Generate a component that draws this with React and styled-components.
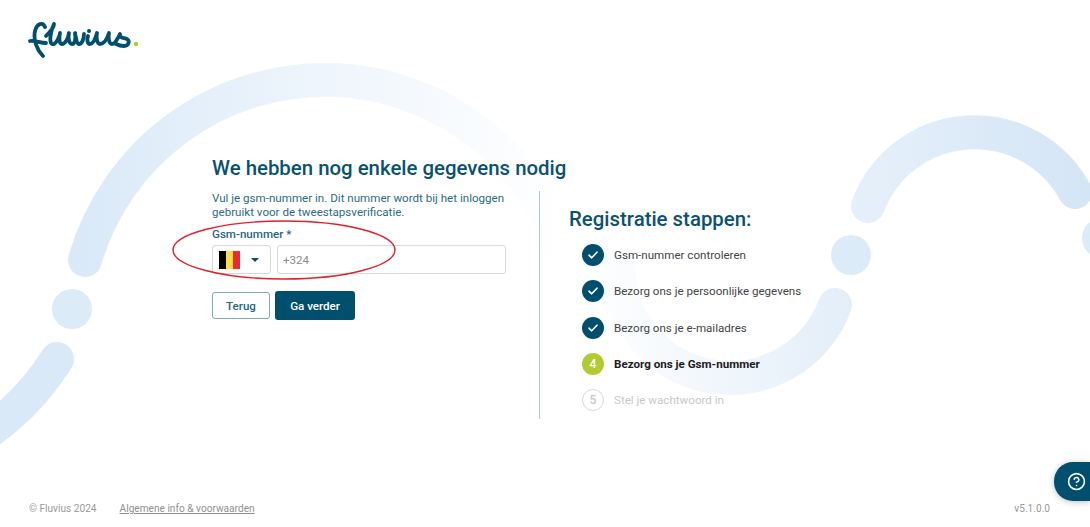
import React from 'react';
import styled, { createGlobalStyle } from 'styled-components';
import { CircleHelp } from 'lucide-react';

const GlobalStyle = createGlobalStyle`
   html, body {
      margin: 0;
      height: 100%;
      background: #fff;
      font-family: Roboto, 'Liberation Sans', sans-serif;
   }
`;

const Page = styled.div`
   position: relative;
   display: flex;
   flex-direction: column;
   height: 527px;
   overflow: hidden;
`;

const Backdrop = styled.svg`
   position: absolute;
   left: 0;
   top: 0;
   width: 1090px;
   height: 527px;
`;

const Header = styled.header`
   position: relative;
   height: 120px;
   padding: 20px 0 0 28px;
   box-sizing: border-box;
`;

const Main = styled.main`
   position: relative;
   flex: 1;
   padding: 35px 0 0 212px;
`;

const Title = styled.h1`
   margin: 0 0 10px;
   font-size: 20.4px;
   line-height: 26px;
   font-weight: 500;
   color: #0a5272;
`;

const Columns = styled.div`
   display: flex;
   align-items: flex-start;
`;

const FormColumn = styled.section`
   position: relative;
   width: 294px;
   padding-right: 33px;
`;

const Intro = styled.p`
   margin: 0 0 8px;
   font-size: 11.6px;
   line-height: 14px;
   color: #2a6d88;
`;

const Label = styled.label`
   display: block;
   margin-bottom: 3px;
   font-size: 11.6px;
   line-height: 15px;
   font-weight: 500;
   color: #2a6584;
`;

const PhoneRow = styled.div`
   display: flex;
   gap: 6px;
   margin-bottom: 17px;
`;

const CountrySelect = styled.div`
   display: flex;
   align-items: center;
   justify-content: space-between;
   width: 59px;
   height: 29px;
   padding: 0 11px 0 6px;
   box-sizing: border-box;
   background: #fff;
   border: 1px solid #d6d9dc;
   border-radius: 3px;
`;

const Flag = styled.span`
   display: flex;
   width: 21px;
   height: 18px;
`;

const Stripe = styled.span`
   flex: 1;
   background: ${p => p.$color};
`;

const Caret = styled.span`
   width: 0;
   height: 0;
   border-left: 4px solid transparent;
   border-right: 4px solid transparent;
   border-top: 4px solid #004f6e;
`;

const PhoneInput = styled.input`
   flex: 1;
   min-width: 0;
   height: 29px;
   padding: 0 5px;
   box-sizing: border-box;
   font-family: inherit;
   font-size: 11.6px;
   background: #fff;
   border: 1px solid #d6d9dc;
   border-radius: 3px;
   outline: none;

   &::placeholder {
      color: #8a8a8a;
      opacity: 1;
   }
`;

const Actions = styled.div`
   display: flex;
   align-items: center;
   gap: 5px;
`;

const Button = styled.button`
   height: ${p => (p.$primary ? '29px' : '27px')};
   width: ${p => (p.$primary ? '80px' : '58px')};
   padding: 0;
   font-family: inherit;
   font-size: 11.6px;
   font-weight: 500;
   color: ${p => (p.$primary ? '#fff' : '#2a6584')};
   background: ${p => (p.$primary ? '#004f6e' : '#fff')};
   border: ${p => (p.$primary ? '0' : '1px solid #7fa7b8')};
   border-radius: 3px;
`;

const Annotation = styled.svg`
   position: absolute;
   left: -42px;
   top: 27px;
   width: 228px;
   height: 64px;
   pointer-events: none;
`;

const Divider = styled.div`
   width: 1px;
   height: 228px;
   background: #b4c8d2;
`;

const StepsColumn = styled.section`
   padding: 15px 0 0 29px;
`;

const StepsTitle = styled.h2`
   margin: 0 0 12px;
   font-size: 20.4px;
   line-height: 26px;
   font-weight: 500;
   color: #0a5272;
`;

const StepList = styled.ol`
   display: flex;
   flex-direction: column;
   gap: 14.3px;
   margin: 0;
   padding: 0 0 0 13px;
   list-style: none;
`;

const Step = styled.li`
   display: flex;
   align-items: center;
   gap: 10px;
   height: 22px;
   font-size: 11.6px;
   font-weight: ${p => (p.$state === 'active' ? 700 : 400)};
   color: ${p => (p.$state === 'active' ? '#1c1c1c' : p.$state === 'todo' ? '#c8c8c8' : '#444')};
`;

const StepBullet = styled.span`
   display: flex;
   align-items: center;
   justify-content: center;
   width: 22px;
   height: 22px;
   box-sizing: border-box;
   border-radius: 50%;
   font-size: 12px;
   font-weight: 500;
   color: ${p => (p.$state === 'todo' ? '#c8c8c8' : '#fff')};
   background: ${p => (p.$state === 'done' ? '#004f6e' : p.$state === 'active' ? '#afcb2f' : '#fff')};
   border: ${p => (p.$state === 'todo' ? '1px solid #d8d8d8' : '0')};
`;

const Footer = styled.footer`
   position: relative;
   display: flex;
   align-items: center;
   gap: 23px;
   height: 38px;
   padding: 0 40px 0 29px;
   box-sizing: border-box;
   font-size: 10.15px;
   color: #999;
`;

const FooterLink = styled.a`
   color: #909090;
   text-decoration: underline;
`;

const Version = styled.span`
   margin-left: auto;
`;

const HelpButton = styled.button`
   position: absolute;
   right: 0;
   top: 462px;
   display: flex;
   align-items: center;
   width: 36px;
   height: 39px;
   padding: 0 0 0 13px;
   color: #fff;
   background: #004f6e;
   border: 0;
   border-radius: 19px 0 0 19px;
   box-shadow: 0 1px 6px rgba(0, 0, 0, 0.25);
`;

const STEPS = [
   { label: 'Gsm-nummer controleren', state: 'done' },
   { label: 'Bezorg ons je persoonlijke gegevens', state: 'done' },
   { label: 'Bezorg ons je e-mailadres', state: 'done' },
   { label: 'Bezorg ons je Gsm-nummer', state: 'active', nr: 4 },
   { label: 'Stel je wachtwoord in', state: 'todo', nr: 5 }
];

const Arcs = () => (
   <Backdrop viewBox="0 0 1090 527" aria-hidden="true">
      <defs>
         <linearGradient id="bigArc" gradientUnits="userSpaceOnUse" x1="70" y1="0" x2="565" y2="0">
            <stop offset="0" stopColor="#d9e9f8" />
            <stop offset="0.5" stopColor="#eef5fc" />
            <stop offset="1" stopColor="#ffffff" />
         </linearGradient>
         <linearGradient id="topArc" gradientUnits="userSpaceOnUse" x1="850" y1="0" x2="1090" y2="0">
            <stop offset="0" stopColor="#e6f0fa" />
            <stop offset="1" stopColor="#d4e5f6" />
         </linearGradient>
         <linearGradient id="lowArc" gradientUnits="userSpaceOnUse" x1="580" y1="0" x2="850" y2="0">
            <stop offset="0" stopColor="#ffffff" />
            <stop offset="1" stopColor="#e3eef9" />
         </linearGradient>
      </defs>
      <g fill="none" strokeWidth="34" strokeLinecap="round">
         <path d="M85 260 A250 250 0 0 1 570 280" stroke="url(#bigArc)" />
         <path d="M57 359 A249 249 0 0 1 -60 458" stroke="#d9e9f8" />
         <path d="M868 206 A114 114 0 0 1 1075 192" stroke="url(#topArc)" />
         <path d="M835 305 A112 112 0 0 1 618 266" stroke="url(#lowArc)" />
      </g>
      <circle cx="72" cy="309" r="20" fill="#dcebf8" />
      <circle cx="851" cy="255" r="20" fill="#dcebf8" />
      <circle cx="1102" cy="238" r="20" fill="#dcebf8" />
   </Backdrop>
);

const Logo = () => (
   <svg width="112" height="40" viewBox="28 20 112 40" aria-label="fluvius">
      <g fill="none" stroke="#004f6e" strokeWidth="3.8" strokeLinecap="round" strokeLinejoin="round">
         <path d="M30 41 C35 40 40 43 46 43 M45 27 C43 22 37 23 35 31 C33 40 37 50 43 56" />
         <path d="M46 36 C50 32 54 27 54 24 C52 28 49 38 51 43 C53 46 56 43 58 39 C59 37 60 35 60 33 C59 38 59 44 62 44 C65 44 68 39 69 33 C68 38 69 44 72 44 C75 44 76 39 75 33 C76 38 77 44 79 44 C82 44 84 39 84 34" />
         <path d="M88 36 C87 39 87 44 90 44 C93 44 95 40 97 33 C96 38 97 44 100 44 C104 44 107 39 109 33 C108 38 109 44 112 44 C115 44 117 40 120 34 C119 38 124 38 127 39 C130 41 129 46 124 46 C121 46 118 45 116 44" />
      </g>
      <circle cx="89" cy="31" r="2" fill="#004f6e" />
      <circle cx="136" cy="44" r="2.2" fill="#afcb2f" />
   </svg>
);

const CheckIcon = () => (
   <svg width="10" height="8" viewBox="0 0 10 8" fill="none" stroke="#fff" strokeWidth="1.6" strokeLinecap="round" strokeLinejoin="round">
      <path d="M1 4.2 L3.7 6.8 L9 1.2" />
   </svg>
);

export default function App() {
   return (
      <Page>
         <GlobalStyle />
         <Arcs />
         <Header>
            <Logo />
         </Header>
         <Main>
            <Title>We hebben nog enkele gegevens nodig</Title>
            <Columns>
               <FormColumn>
                  <Intro>
                     Vul je gsm-nummer in. Dit nummer wordt bij het inloggen gebruikt voor de tweestapsverificatie.
                  </Intro>
                  <Label>Gsm-nummer *</Label>
                  <PhoneRow>
                     <CountrySelect>
                        <Flag>
                           <Stripe $color="#000" />
                           <Stripe $color="#fae042" />
                           <Stripe $color="#ed2939" />
                        </Flag>
                        <Caret />
                     </CountrySelect>
                     <PhoneInput placeholder="+324" />
                  </PhoneRow>
                  <Actions>
                     <Button>Terug</Button>
                     <Button $primary>Ga verder</Button>
                  </Actions>
                  <Annotation viewBox="0 0 228 64" aria-hidden="true">
                     <ellipse cx="114" cy="32" rx="111" ry="29" fill="none" stroke="#e0202c" strokeWidth="1.4" />
                  </Annotation>
               </FormColumn>
               <Divider />
               <StepsColumn>
                  <StepsTitle>Registratie stappen:</StepsTitle>
                  <StepList>
                     {STEPS.map(step => (
                        <Step key={step.label} $state={step.state}>
                           <StepBullet $state={step.state}>{step.nr || <CheckIcon />}</StepBullet>
                           {step.label}
                        </Step>
                     ))}
                  </StepList>
               </StepsColumn>
            </Columns>
         </Main>
         <Footer>
            <span>© Fluvius 2024</span>
            <FooterLink>Algemene info &amp; voorwaarden</FooterLink>
            <Version>v5.1.0.0</Version>
         </Footer>
         <HelpButton aria-label="Help">
            <CircleHelp size={19} strokeWidth={2} />
         </HelpButton>
      </Page>
   );
}
